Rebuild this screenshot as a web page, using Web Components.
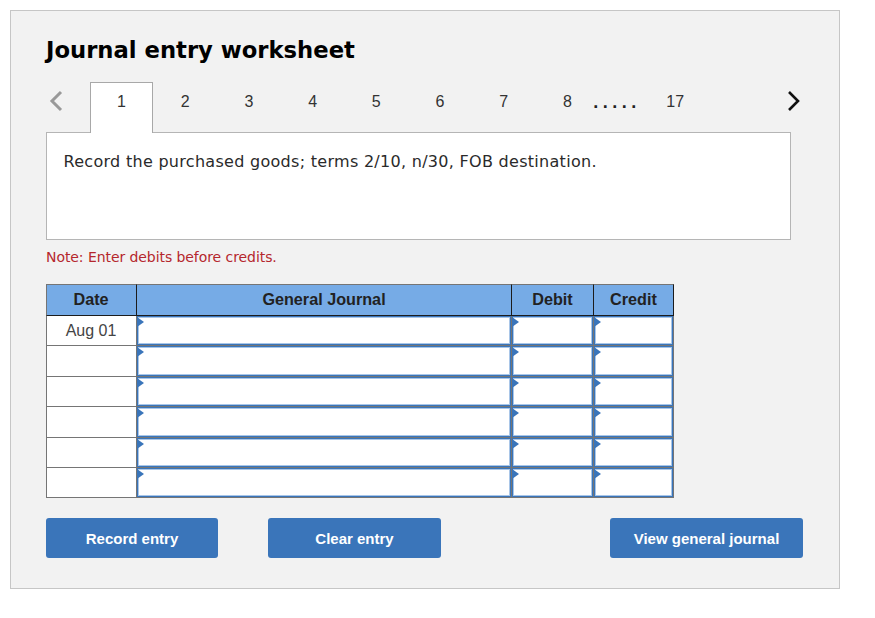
<!DOCTYPE html>
<html lang="en"><head><meta charset="utf-8"><title>Journal entry worksheet</title>
<style>html,body{margin:0;padding:0;background:#fff}body{padding:10px;font-family:"Liberation Sans",Arial,sans-serif}</style>
</head><body>
<je-worksheet>
  <span slot="title">Journal entry worksheet</span>
  <je-tabs slot="tabs"></je-tabs>
  <span slot="prompt">Record the purchased goods; terms 2/10, n/30, FOB destination.</span>
  <span slot="note">Note: Enter debits before credits.</span>
  <je-table slot="table"></je-table>
  <je-button slot="actions" style="width:172px;margin-right:50px">Record entry</je-button>
  <je-button slot="actions" style="width:173px;margin-right:169px">Clear entry</je-button>
  <je-button slot="actions" style="width:193px">View general journal</je-button>
</je-worksheet>
<script>
class JeWorksheet extends HTMLElement{constructor(){super();this.attachShadow({mode:'open'}).innerHTML=`<style>
:host{display:block;box-sizing:border-box;width:830px;height:579px;background:#f2f2f2;border:1px solid #c6c6c6;padding:0 35px}
h1{margin:0;padding-top:24px;height:30px;padding-bottom:17px;font:bold 22.7px/30px "DejaVu Sans",Verdana,sans-serif;color:#000}
.prompt{box-sizing:border-box;height:108px;width:745px;background:#fff;border:1px solid #b5b5b5;padding:19px 16.5px;font:16px/20px "DejaVu Sans",Verdana,sans-serif;letter-spacing:.29px;color:#2a2a2a}
.note{margin-top:8px;height:18px;font:14px/18px "DejaVu Sans",Verdana,sans-serif;letter-spacing:-.07px;color:#b5272d}
.t{margin-top:18px}
.a{display:flex;margin-top:20px;width:780px}
</style><h1><slot name="title"></slot></h1><slot name="tabs"></slot><div class="prompt"><slot name="prompt"></slot></div><div class="note"><slot name="note"></slot></div><div class="t"><slot name="table"></slot></div><div class="a"><slot name="actions"></slot></div>`}}
class JeTabs extends HTMLElement{constructor(){super();const tabs=[1,2,3,4,5,6,7,8].map((n,i)=>`<div class="tab${i?'':' on'}">${n}</div>`).join('');this.attachShadow({mode:'open'}).innerHTML=`<style>
:host{display:flex;height:51px;position:relative;z-index:1;margin-bottom:-1px;width:760px;font:16px/1 "Liberation Sans",Arial,sans-serif;color:#333}
.nav{width:44px;flex:none;padding-top:8px;box-sizing:border-box}
.tab{box-sizing:border-box;width:63.7px;flex:none;text-align:center;padding-top:10px;line-height:20px}
.tab.on{width:63px;margin-right:.4px;background:#fff;border:1px solid #a8a8a8;border-bottom:0;padding-top:9px}
.dots{width:44px;flex:none;margin-left:-6px;padding-top:10px;line-height:20px;font-weight:bold;font-size:18px;letter-spacing:4.5px;color:#222;white-space:nowrap}
.last{margin-left:12px;width:52px;text-align:center;flex:none;padding-top:10px;line-height:20px}
.next{margin-left:auto;width:20px;padding-top:8px;box-sizing:border-box}
svg{display:block}
</style><div class="nav"><svg width="20" height="22" viewBox="0 0 20 22"><path d="M15 2 6 11l9 9" fill="none" stroke="#999" stroke-width="3"/></svg></div>${tabs}<div class="dots">.....</div><div class="last">17</div><div class="next"><svg width="20" height="22" viewBox="0 0 20 22"><path d="M3 2l9 9-9 9" fill="none" stroke="#111" stroke-width="2.6"/></svg></div>`}}
class JeTable extends HTMLElement{constructor(){super();
const dates=['Aug 01','','','','',''],h=[30,31,30,31,30,30];
const cell=s=>`<div class="in" style="height:${s}px"><div class="f"><i></i></div></div>`;
const rows=dates.map((d,i)=>`<div class="d" style="height:${h[i]}px">${d}</div>${cell(h[i])}${cell(h[i])}${cell(h[i])}`).join('');
this.attachShadow({mode:'open'}).innerHTML=`<style>
:host{display:block;width:628px;box-sizing:border-box;font-family:"Liberation Sans",Arial,sans-serif}
.g{display:grid;grid-template-columns:91px 375px 82px 80px}
.h{box-sizing:border-box;height:32px;background:#76abe6;border-top:1px solid #757575;border-right:1px solid #1c1c1c;border-bottom:1px solid #1c1c1c;font:bold 16.2px/29px "Liberation Sans",Arial,sans-serif;color:#222;text-align:center}
.h:first-child{border-left:1px solid #757575;padding-right:1px}
.d{box-sizing:border-box;background:#fff;border-left:1px solid #757575;border-right:1px solid #757575;border-bottom:1px solid #757575;padding-right:1px;font-size:16px;line-height:29px;color:#444;text-align:center}
.in{box-sizing:border-box;background:#fff;border-right:1px solid #757575;border-bottom:1px solid #757575}
.f{box-sizing:border-box;height:100%;position:relative;border:1px solid #3a75ba;box-shadow:inset 0 0 0 1px #a9c6e8;background:#fff}
.f i{position:absolute;left:-1px;top:0;width:0;height:0;border-left:7px solid #3a75ba;border-top:5px solid transparent;border-bottom:5px solid transparent}
</style><div class="g"><div class="h">Date</div><div class="h">General Journal</div><div class="h">Debit</div><div class="h">Credit</div>${rows}</div>`}}
class JeButton extends HTMLElement{constructor(){super();this.attachShadow({mode:'open'}).innerHTML=`<style>
:host{display:flex;align-items:center;justify-content:center;box-sizing:border-box;height:40px;flex:none;background:#3a75ba;border-radius:3px;color:#fff;font:bold 15px/1 "Liberation Sans",Arial,sans-serif}
</style><slot></slot>`}}
customElements.define('je-worksheet',JeWorksheet);customElements.define('je-tabs',JeTabs);customElements.define('je-table',JeTable);customElements.define('je-button',JeButton);
</script>
</body></html>
